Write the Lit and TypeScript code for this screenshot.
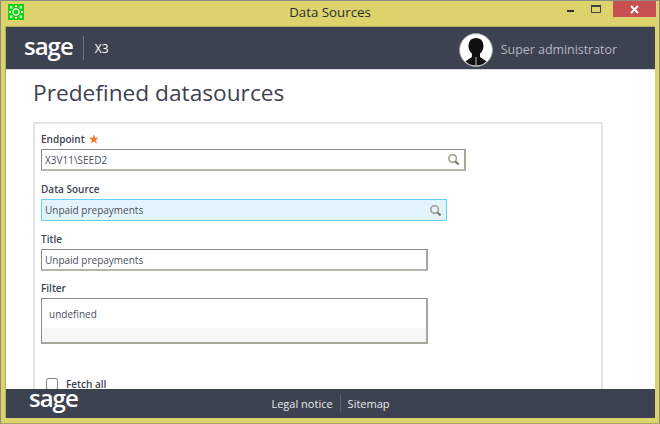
import { LitElement, html, css } from "lit";
import { customElement } from "lit/decorators.js";

const search = html`<svg class="search" width="13" height="13" viewBox="0 0 13 13" fill="none"><circle cx="5.6" cy="5.6" r="3.8" stroke="#a29e92" stroke-width="1.6"/><path d="M8.4 8.6 11.6 11.6" stroke="#77756c" stroke-width="2"/></svg>`;

@customElement("app-root")
export class AppRoot extends LitElement {
  static styles = css`
    :host { display: block; width: 660px; height: 424px; overflow: hidden; font-family: "Open Sans", "Noto Sans", sans-serif; }
    * { box-sizing: border-box; }
    .window { width: 660px; height: 424px; background: #ddd36c; border: 1px solid #8c8c80; border-bottom-color: #a8a468; display: flex; flex-direction: column; padding: 0 4px 5px 4px; }
    .titlebar { height: 25px; flex: none; display: flex; align-items: center; position: relative; justify-content: center; font-size: 13.3px; line-height: 21px; padding-bottom: 2px; color: #2c2c2c; }
    .appicon { position: absolute; left: 3px; top: 3px; }
    .controls { position: absolute; right: 0; top: 0; display: flex; align-items: flex-start; }
    .min { width: 7px; height: 2px; background: #333; margin: 9px 17px 0 0; }
    .max { width: 10px; height: 8px; border: 1px solid #444; border-top-width: 2px; margin: 4px 12px 0 0; }
    .close { width: 43px; height: 16px; background: #c75050; display: flex; align-items: center; justify-content: center; margin-right: -1px; }
    .client { flex: 1; min-height: 0; display: flex; flex-direction: column; background: #fff; border: 1px solid #b4ae5e; border-width: 1px 0 0 1px; }
    .header { height: 43px; flex: none; background: #3d4250; border-bottom: 1px solid #d9dbe0; display: flex; align-items: center; padding: 0 38px 0 18px; color: #fff; }
    .sage { font-family: "Open Sans", sans-serif; font-weight: 600; letter-spacing: -1px; color: #fff; line-height: 1; }
    .header .sage { font-size: 24px; margin-top: -5px; }
    .brand-sep { width: 1px; height: 24px; background: #6c707c; margin: 0 11px 0 10px; }
    .x3 { font-size: 12px; color: #ffffff; }
    .spacer { flex: 1; }
    .user { display: flex; align-items: center; gap: 8px; font-size: 12.4px; color: #b5b9c2; padding-top: 3px; }
    .avatar { display: block; }
    .main { flex: 1; min-height: 0; overflow: hidden; padding: 7px 52px 0 27px; display: flex; flex-direction: column; }
    h1 { margin: 0 0 13px 0; font-size: 22.7px; line-height: 32px; font-weight: 400; color: #3d4250; flex: none; }
    .card { border: 2px solid #e3e3e3; border-bottom: 0; padding: 7px 6px 0 6px; flex: 1; display: flex; flex-direction: column; align-items: flex-start; }
    label { display: block; font-size: 10px; line-height: 16px; font-weight: 600; color: #3d4250; height: 18px; }
    .star { color: #ef7b2d; font-size: 11px; margin-left: 2px; }
    .input { height: 22px; border: 1px solid #a6a89c; border-top-color: #8a8c82; border-left-color: #8a8c82; border-right-width: 2px; border-bottom-width: 2px; border-bottom-color: #b4b6ac; background: #fff; display: flex; align-items: center; padding: 0 4px 0 3px; font-size: 10px; color: #4a4f5c; margin-bottom: 10px; }
    .input span { flex: 1; }
    .w1 { width: 425px; }
    .w2 { width: 406px; background: #e3f3fb; border: 1px solid #63d0f5; }
    .w3 { width: 387px; margin-bottom: 9px; }
    .search { flex: none; margin-right: 0; }
    .area { width: 387px; height: 46px; margin-bottom: 34px; border: 1px solid #8a8c82; border-right: 2px solid #a6a89c; border-bottom: 2px solid #a6a89c; display: flex; flex-direction: column; font-size: 10px; color: #4a4f5c; }
    .area-top { height: 29px; padding: 8px 7px 0; line-height: 15px; }
    .area-bot { flex: 1; background: #f6f6f6; }
    .check { display: flex; align-items: center; gap: 8px; margin-left: 5px; font-size: 10px; line-height: 12px; font-weight: 600; color: #3d4250; }
    .box { width: 12px; height: 12px; border: 1.5px solid #7d8794; border-radius: 2px; background: #fff; }
    .footer { height: 29px; flex: none; background: #3d4250; position: relative; display: flex; align-items: center; justify-content: center; font-size: 11px; color: #e8e9ec; }
    .footer .sage { position: absolute; left: 23px; top: -3px; font-size: 24px; }
    .links { display: flex; align-items: center; }
    .links i { width: 1px; height: 17px; background: #5b606d; margin: 0 7px; }
  `;

  render() {
    return html`
      <div class="window">
        <div class="titlebar">
          <svg class="appicon" width="16" height="16" viewBox="0 0 16 16">
            <rect width="16" height="16" fill="#0fd40f"/>
            <circle cx="8" cy="8" r="3" fill="none" stroke="#e8ffe8" stroke-width="1.3"/>
            <g fill="#d8ffd8"><rect x="2" y="2" width="2.5" height="2.5"/><rect x="11.5" y="2" width="2.5" height="2.5"/><rect x="2" y="11.5" width="2.5" height="2.5"/><rect x="11.5" y="11.5" width="2.5" height="2.5"/><rect x="7" y="1" width="2" height="2"/><rect x="7" y="13" width="2" height="2"/><rect x="1" y="7" width="2" height="2"/><rect x="13" y="7" width="2" height="2"/></g>
          </svg>
          Data Sources
          <div class="controls">
            <div class="min"></div>
            <div class="max"></div>
            <div class="close"><svg width="9" height="9" viewBox="0 0 9 9"><path d="M1 1 8 8M8 1 1 8" stroke="#fff" stroke-width="2"/></svg></div>
          </div>
        </div>
        <div class="client">
          <div class="header">
            <span class="sage">sage</span>
            <span class="brand-sep"></span>
            <span class="x3">X3</span>
            <span class="spacer"></span>
            <div class="user">
              <svg class="avatar" width="34" height="34" viewBox="0 0 34 34">
                <defs><clipPath id="c"><circle cx="17" cy="17" r="15.5"/></clipPath></defs>
                <circle cx="17" cy="17" r="16.5" fill="#fff" stroke="#9a9a9a" stroke-width="1"/>
                <g clip-path="url(#c)">
                  <path d="M17 5c-5 0-7.500 3.600-7.500 8 0 3.600 1.600 6 3.400 7.600v3.400L4 30v4h26v-4l-9-6v-3.400c1.800-1.600 3.500-4 3.500-7.600 0-4.400-2.500-8-7.500-8z" fill="#111"/>
                  <path d="M16.600 24v10h.8V24z" fill="#eee"/>
                </g>
              </svg>
              Super administrator
            </div>
          </div>
          <div class="main">
            <h1>Predefined datasources</h1>
            <div class="card">
              <label>Endpoint <span class="star">★</span></label>
              <div class="input w1"><span>X3V11\\SEED2</span>${search}</div>
              <label>Data Source</label>
              <div class="input w2"><span>Unpaid prepayments</span>${search}</div>
              <label>Title</label>
              <div class="input w3"><span>Unpaid prepayments</span></div>
              <label>Filter</label>
              <div class="area"><div class="area-top">undefined</div><div class="area-bot"></div></div>
              <div class="check"><div class="box"></div>Fetch all</div>
            </div>
          </div>
          <div class="footer">
            <span class="sage">sage</span>
            <div class="links"><span>Legal notice</span><i></i><span>Sitemap</span></div>
          </div>
        </div>
      </div>
    `;
  }
}
